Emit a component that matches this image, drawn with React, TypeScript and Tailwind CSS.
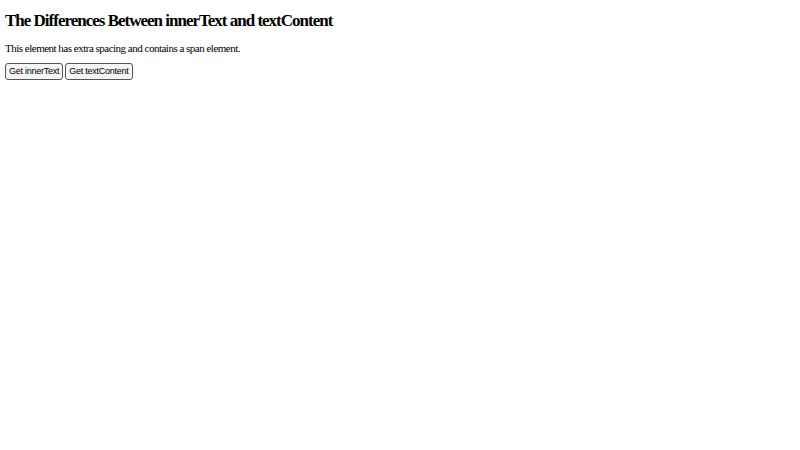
export default function App() {
  return (
    <div className="px-[5px] pt-[9px] font-['Liberation_Serif',serif] text-black">
      <h2 className="text-[17px] font-bold leading-[23px] tracking-[-1px]">
        The Differences Between innerText and textContent
      </h2>
      <p className="mt-[9px] text-[11px] leading-[14px] tracking-[-0.5px]">
        This element has extra spacing and contains a <span>span</span> element.
      </p>
      <div className="mt-[8px] flex gap-[2px] font-['Liberation_Sans',sans-serif] text-[9px] tracking-[-0.25px]">
        <button className="rounded-[3px] border border-[#555] bg-[#f5f5f5] px-[3px] py-[2px] leading-[11px]">
          Get innerText
        </button>
        <button className="rounded-[3px] border border-[#555] bg-[#f5f5f5] px-[3px] py-[2px] leading-[11px]">
          Get textContent
        </button>
      </div>
    </div>
  );
}
